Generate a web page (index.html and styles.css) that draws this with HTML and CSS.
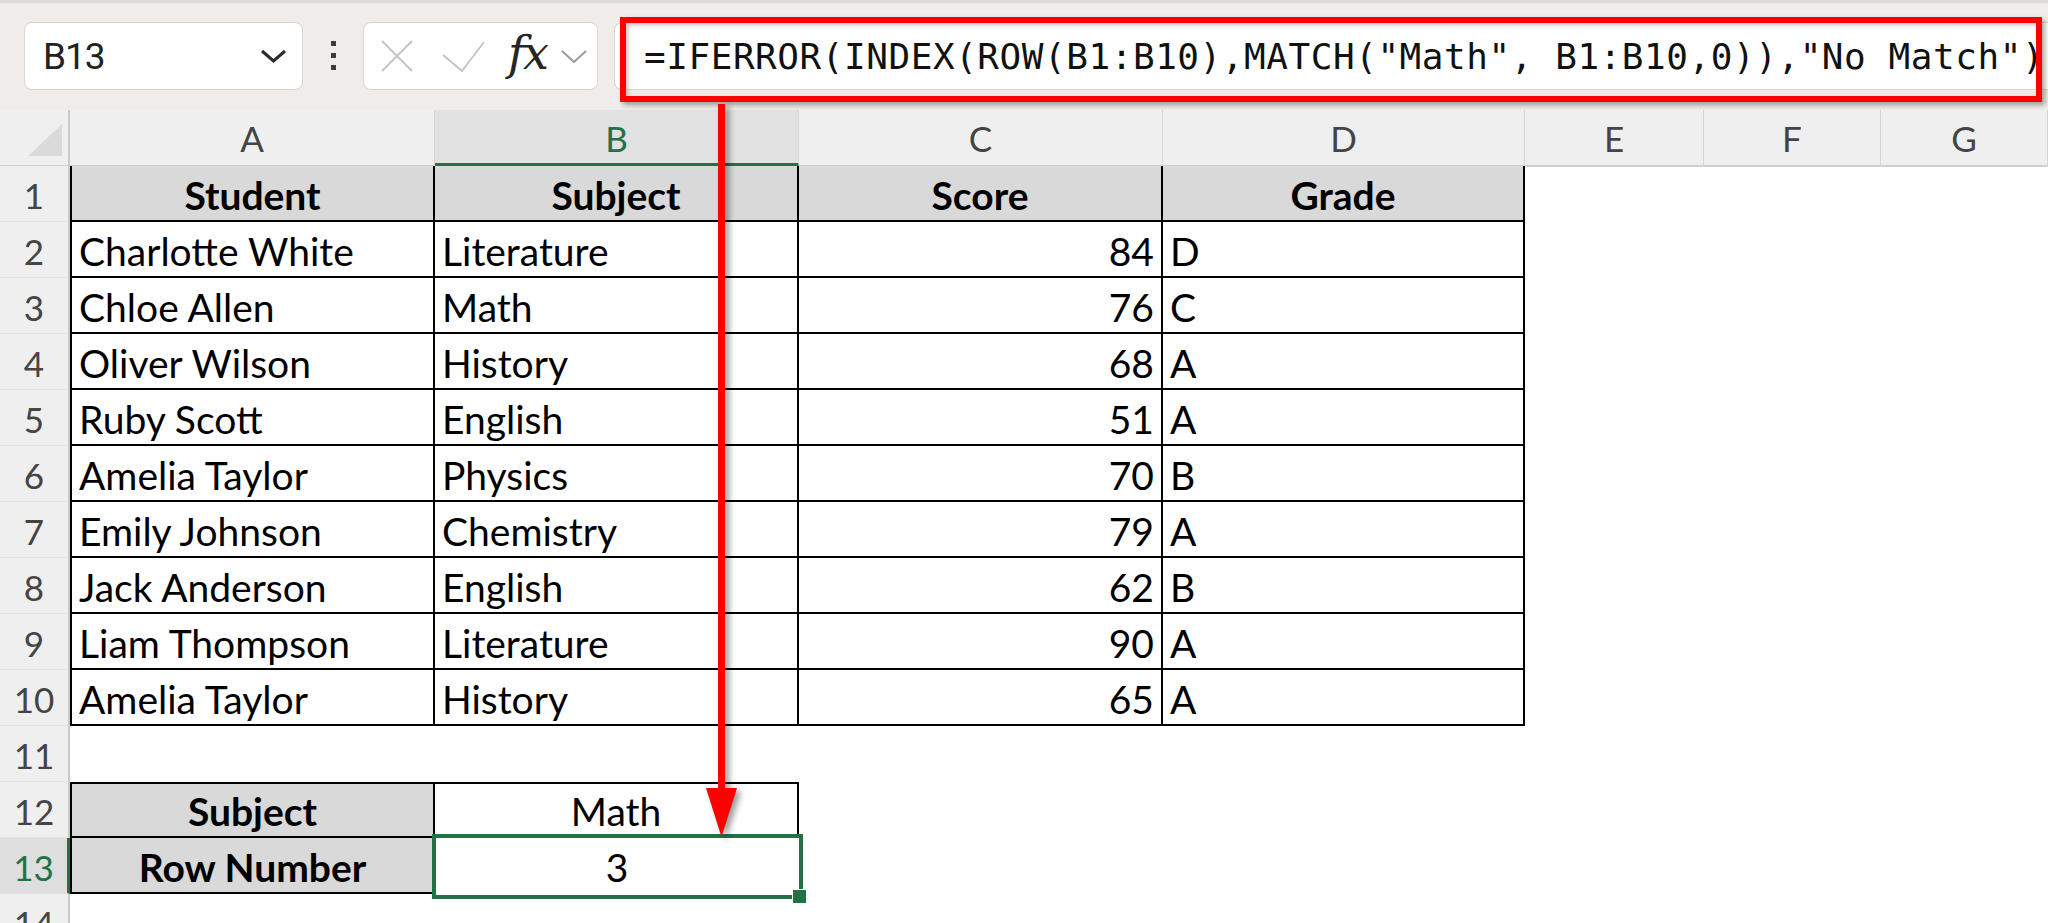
FILE: index.html
```html
<!DOCTYPE html>
<html lang="en">
<head>
	<meta charset="UTF-8">
	<title>Row Number Lookup</title>
	<link rel="stylesheet" href="styles.css">
</head>
<body>
	<!-- name box + formula bar -->
	<div class="toolbar">
		<div class="namebox">
			<span>B13</span>
			<svg class="chev" width="27" height="14" viewBox="0 0 27 14"><polyline points="2,2 13.5,12 25,2"/></svg>
		</div>
		<div class="dots"><i></i><i></i><i></i></div>
		<div class="fxbox">
			<svg class="cancel" width="32" height="32" viewBox="0 0 32 32"><path d="M1 1 L31 31 M31 1 L1 31"/></svg>
			<svg class="enter" width="43" height="31" viewBox="0 0 43 31"><polyline points="1,14 20,30 42,1"/></svg>
			<span class="fx">fx</span>
			<svg class="chev small" width="26" height="13" viewBox="0 0 26 13"><polyline points="1,1 13,12 25,1"/></svg>
		</div>
		<div class="formula">=IFERROR(INDEX(ROW(B1:B10),MATCH("Math", B1:B10,0)),"No Match")</div>
	</div>

	<div class="sheet">
		<div class="heads">
			<div class="corner"><svg width="34" height="32" viewBox="0 0 34 32"><polygon points="34,0 34,32 0,32"/></svg></div>
			<div class="col">A</div>
			<div class="col on">B</div>
			<div class="col">C</div>
			<div class="col">D</div>
			<div class="col">E</div>
			<div class="col">F</div>
			<div class="col">G</div>
		</div>

		<div class="row">
			<div class="num">1</div>
			<div class="cell t a th">Student</div>
			<div class="cell t th">Subject</div>
			<div class="cell t th">Score</div>
			<div class="cell t th">Grade</div>
		</div>
		<div class="row">
			<div class="num">2</div>
			<div class="cell t a">Charlotte White</div>
			<div class="cell t">Literature</div>
			<div class="cell t r">84</div>
			<div class="cell t">D</div>
		</div>
		<div class="row">
			<div class="num">3</div>
			<div class="cell t a">Chloe Allen</div>
			<div class="cell t">Math</div>
			<div class="cell t r">76</div>
			<div class="cell t">C</div>
		</div>
		<div class="row">
			<div class="num">4</div>
			<div class="cell t a">Oliver Wilson</div>
			<div class="cell t">History</div>
			<div class="cell t r">68</div>
			<div class="cell t">A</div>
		</div>
		<div class="row">
			<div class="num">5</div>
			<div class="cell t a">Ruby Scott</div>
			<div class="cell t">English</div>
			<div class="cell t r">51</div>
			<div class="cell t">A</div>
		</div>
		<div class="row">
			<div class="num">6</div>
			<div class="cell t a">Amelia Taylor</div>
			<div class="cell t">Physics</div>
			<div class="cell t r">70</div>
			<div class="cell t">B</div>
		</div>
		<div class="row">
			<div class="num">7</div>
			<div class="cell t a">Emily Johnson</div>
			<div class="cell t">Chemistry</div>
			<div class="cell t r">79</div>
			<div class="cell t">A</div>
		</div>
		<div class="row">
			<div class="num">8</div>
			<div class="cell t a">Jack Anderson</div>
			<div class="cell t">English</div>
			<div class="cell t r">62</div>
			<div class="cell t">B</div>
		</div>
		<div class="row">
			<div class="num">9</div>
			<div class="cell t a">Liam Thompson</div>
			<div class="cell t">Literature</div>
			<div class="cell t r">90</div>
			<div class="cell t">A</div>
		</div>
		<div class="row">
			<div class="num">10</div>
			<div class="cell t a">Amelia Taylor</div>
			<div class="cell t">History</div>
			<div class="cell t r">65</div>
			<div class="cell t">A</div>
		</div>
		<div class="row">
			<div class="num">11</div>
		</div>
		<div class="row">
			<div class="num">12</div>
			<div class="cell t a th top">Subject</div>
			<div class="cell t c top">Math</div>
		</div>
		<div class="row">
			<div class="num sel">13</div>
			<div class="cell t a th">Row Number</div>
			<div class="cell c pick">3<span class="handle"></span></div>
		</div>
		<div class="row">
			<div class="num">14</div>
		</div>
	</div>

	<!-- annotation: box round the formula and arrow down to the result -->
	<div class="callout"></div>
	<svg class="arrow" width="50" height="745" viewBox="0 0 50 745">
		<rect x="18" y="4" width="7" height="690"/>
		<polygon points="6,688 37,688 21.5,737"/>
	</svg>
</body>
</html>
```

FILE: styles.css
```css
body {
	margin: 0;
	width: 2048px;
	height: 923px;
	overflow: hidden;
	position: relative;
	background: #fff;
	font-family: "Lato", sans-serif;
}

/* ---- formula bar ---- */
.toolbar {
	height: 110px;
	box-sizing: border-box;
	border-top: 3px solid #e0dad7;
	background: #f0ece9;
	display: flex;
	align-items: flex-start;
	padding: 19px 0 0 24px;
}
.namebox {
	width: 279px;
	height: 68px;
	box-sizing: border-box;
	border: 1px solid #d9d5d2;
	border-radius: 8px;
	background: #fff;
	display: flex;
	align-items: center;
	justify-content: space-between;
	padding: 0 15px 0 18px;
	font: 37px "Roboto", sans-serif;
	letter-spacing: -1px;
	color: #222;
}
.chev polyline {
	fill: none;
	stroke: #2b2b2b;
	stroke-width: 3;
}
.chev.small polyline {
	stroke: #9a9a9a;
	stroke-width: 2;
}
.dots {
	display: flex;
	flex-direction: column;
	gap: 7px;
	margin: 19px 27px 0 28px;
}
.dots i {
	width: 5px;
	height: 5px;
	background: #3c3c3c;
}
.fxbox {
	width: 235px;
	height: 68px;
	box-sizing: border-box;
	border: 1px solid #d9d5d2;
	border-radius: 8px;
	background: #fff;
	display: flex;
	align-items: center;
	padding-left: 17px;
}
.cancel path, .enter polyline {
	fill: none;
	stroke: #c2c2c2;
	stroke-width: 1.8;
}
.enter {
	margin-left: 29px;
}
.fx {
	margin: -6px 0 0 23px;
	font: italic 46px "DejaVu Serif", serif;
	line-height: 1;
	letter-spacing: -2px;
	color: #262626;
}
.chev.small {
	margin-left: 14px;
}
.formula {
	flex: 1;
	margin-left: 16px;
	height: 68px;
	box-sizing: border-box;
	border: 1px solid #d9d5d2;
	border-right: none;
	border-radius: 8px 0 0 8px;
	background: #fff;
	padding-left: 29px;
	font: 36px "DejaVu Sans Mono", monospace;
	letter-spacing: 0.55px;
	line-height: 68px;
	color: #111;
	white-space: nowrap;
	overflow: hidden;
}

/* ---- grid ---- */
.heads, .row {
	display: grid;
	grid-template-columns: 70px 365px 364px 364px 362px 179px 177px 1fr;
}
.heads {
	height: 56px;
	background: #efefef;
}
.corner {
	box-sizing: border-box;
	border-right: 2px solid #c9c9c9;
	border-bottom: 2px solid #cfcfcf;
	display: flex;
	justify-content: flex-end;
	align-items: flex-end;
	padding: 0 6px 9px 0;
}
.corner polygon {
	fill: #dadada;
}
.col {
	box-sizing: border-box;
	border-right: 1px solid #d6d6d6;
	border-bottom: 2px solid #cfcfcf;
	padding-top: 4px;
	line-height: 49px;
	font-size: 35px;
	text-align: center;
	color: #444;
}
.col.on {
	background: #e1e1e1;
	color: #217346;
	border-bottom: 4px solid #217346;
}

.row {
	height: 56px;
}
.num {
	box-sizing: border-box;
	background: #efefef;
	border-right: 2px solid #c9c9c9;
	border-bottom: 1px solid #e2e2e2;
	padding-top: 5px;
	line-height: 49px;
	font-size: 35px;
	text-align: center;
	color: #444;
}
.num.sel {
	background: #dedede;
	color: #217346;
	border-right: 3px solid #217346;
}
.cell {
	box-sizing: border-box;
	height: 56px;
	padding: 4px 7px 0;
	line-height: 50px;
	font-size: 39px;
	color: #000;
	white-space: nowrap;
	overflow: hidden;
}
.t {
	border-right: 2px solid #000;
	border-bottom: 2px solid #000;
}
.a {
	border-left: 2px solid #000;
}
.top {
	border-top: 2px solid #000;
	padding-top: 2px;
}
.th {
	background: #d9d9d9;
	font-weight: 700;
	text-align: center;
}
.r {
	text-align: right;
}
.c {
	text-align: center;
}

/* active cell */
.pick {
	position: relative;
	overflow: visible;
}
.pick::after {
	content: "";
	position: absolute;
	top: -4px;
	left: -3px;
	right: -4px;
	bottom: -5px;
	border: 4px solid #217346;
}
.handle {
	position: absolute;
	right: -8px;
	bottom: -10px;
	width: 13px;
	height: 13px;
	border: 1px solid #fff;
	background: #217346;
	z-index: 1;
}

/* ---- annotation ---- */
.callout {
	position: absolute;
	left: 620px;
	top: 17px;
	width: 1422px;
	height: 85px;
	box-sizing: border-box;
	border: 6px solid #ff0000;
	box-shadow: 3px 3px 5px rgba(0, 0, 0, .35), inset 2px 2px 4px rgba(0, 0, 0, .25);
}
.arrow {
	position: absolute;
	left: 700px;
	top: 100px;
	fill: #ff0000;
	filter: drop-shadow(4px 3px 3px rgba(0, 0, 0, .4));
}
```
